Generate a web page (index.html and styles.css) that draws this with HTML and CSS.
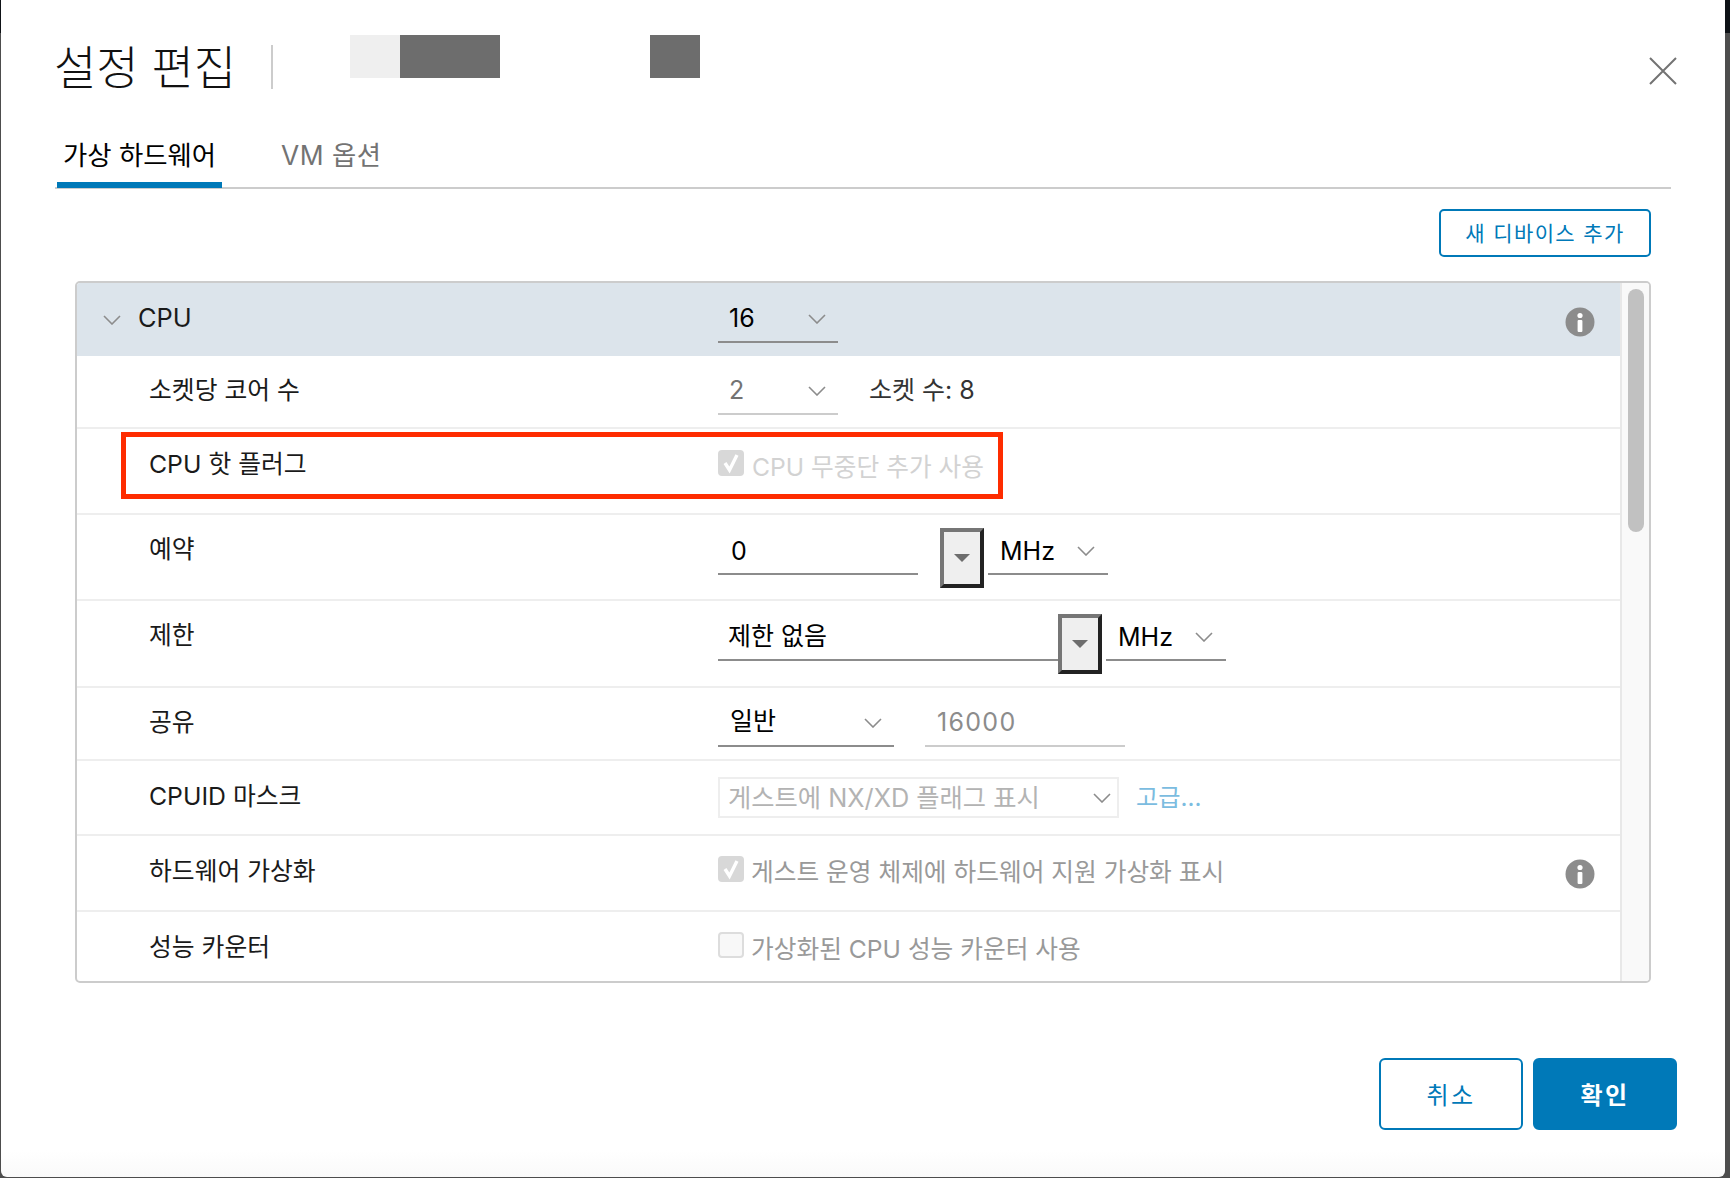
FILE: index.html
```html
<!DOCTYPE html>
<html lang="ko">
<head>
<meta charset="utf-8">
<title>설정 편집</title>
<link rel="stylesheet" href="styles.css">
</head>
<body>
<div class="dialog">
  <header class="head">
    <h1 class="title">설정 편집</h1>
    <span class="vr"></span>
    <div class="redact">
      <span class="rd light"></span><span class="rd dark wide"></span><span class="rd gap"></span><span class="rd dark"></span>
    </div>
    <button class="close" aria-label="닫기">
      <svg width="28" height="28" viewBox="0 0 28 28"><path d="M1 1L27 27M27 1L1 27" stroke="#737373" stroke-width="2" fill="none"/></svg>
    </button>
  </header>
  <nav class="tabs">
    <a class="tab active">가상 하드웨어</a>
    <a class="tab">VM 옵션</a>
  </nav>
  <div class="actions"><button class="btn add">새 디바이스 추가</button></div>
  <section class="panel">
    <div class="rows">
      <div class="row r-head">
        <svg class="chev twist" viewBox="0 0 18 10"><path d="M1 1L9 9L17 1"/></svg>
        <span class="label strong">CPU</span>
        <div class="ctl">
          <span class="sel w120"><span class="val">16</span><svg class="chev" viewBox="0 0 18 10"><path d="M1 1L9 9L17 1"/></svg></span>
        </div>
        <svg class="info" viewBox="0 0 30 30"><circle cx="15" cy="15" r="14.5"/><circle class="i" cx="15" cy="8.5" r="2.6"/><rect class="i" x="12.6" y="13" width="4.8" height="12" rx="1"/></svg>
      </div>
      <div class="row r1">
        <span class="label">소켓당 코어 수</span>
        <div class="ctl">
          <span class="sel w120 off"><span class="val">2</span><svg class="chev" viewBox="0 0 18 10"><path d="M1 1L9 9L17 1"/></svg></span>
          <span class="note">소켓 수: 8</span>
        </div>
      </div>
      <div class="row r2">
        <span class="label">CPU 핫 플러그</span>
        <div class="ctl">
          <span class="cb on"><svg viewBox="0 0 26 26"><path d="M7 13L11.5 20L19 5"/></svg></span>
          <span class="cbt faint">CPU 무중단 추가 사용</span>
        </div>
        <span class="mark"></span>
      </div>
      <div class="row r3">
        <span class="label">예약</span>
        <div class="ctl">
          <span class="inp w200 tall"><span class="val">0</span></span>
          <span class="spin s3"><i></i></span>
          <span class="sel w120 unit tall"><span class="val">MHz</span><svg class="chev" viewBox="0 0 18 10"><path d="M1 1L9 9L17 1"/></svg></span>
        </div>
      </div>
      <div class="row r4">
        <span class="label">제한</span>
        <div class="ctl">
          <span class="inp w340 tall"><span class="val tight">제한 없음</span></span>
          <span class="spin s4"><i></i></span>
          <span class="sel w120 unit tall"><span class="val">MHz</span><svg class="chev" viewBox="0 0 18 10"><path d="M1 1L9 9L17 1"/></svg></span>
        </div>
      </div>
      <div class="row r5">
        <span class="label">공유</span>
        <div class="ctl">
          <span class="sel w176"><span class="val">일반</span><svg class="chev" viewBox="0 0 18 10"><path d="M1 1L9 9L17 1"/></svg></span>
          <span class="inp w200 off share"><span class="val">16000</span></span>
        </div>
      </div>
      <div class="row r6">
        <span class="label">CPUID 마스크</span>
        <div class="ctl">
          <span class="box"><span class="boxt">게스트에 NX/XD 플래그 표시</span><svg class="chev" viewBox="0 0 18 10"><path d="M1 1L9 9L17 1"/></svg></span>
          <a class="link">고급...</a>
        </div>
      </div>
      <div class="row r7">
        <span class="label">하드웨어 가상화</span>
        <div class="ctl">
          <span class="cb on"><svg viewBox="0 0 26 26"><path d="M7 13L11.5 20L19 5"/></svg></span>
          <span class="cbt">게스트 운영 체제에 하드웨어 지원 가상화 표시</span>
        </div>
        <svg class="info" viewBox="0 0 30 30"><circle cx="15" cy="15" r="14.5"/><circle class="i" cx="15" cy="8.5" r="2.6"/><rect class="i" x="12.6" y="13" width="4.8" height="12" rx="1"/></svg>
      </div>
      <div class="row r8">
        <span class="label">성능 카운터</span>
        <div class="ctl">
          <span class="cb"></span>
          <span class="cbt">가상화된 CPU 성능 카운터 사용</span>
        </div>
      </div>
    </div>
    <div class="track"><span class="thumb"></span></div>
  </section>
  <footer class="foot">
    <button class="btn lg">취소</button>
    <button class="btn lg primary">확인</button>
  </footer>
</div>
</body>
</html>
```

FILE: styles.css
```css
* { box-sizing: border-box; }
html, body { margin: 0; height: 100%; }
body {
  background: linear-gradient(#0e1216 33px, #4d4d4d 33px);
  font-family: "Inter", "Noto Sans CJK KR", sans-serif;
  color: #000;
  overflow: hidden;
}
.dialog {
  width: 1724px;
  height: 1177px;
  margin-left: 1px;
  background: linear-gradient(#fff 1150px, #fafafa);
  border-radius: 0 0 6px 6px;
  display: flex;
  flex-direction: column;
}
.head {
  height: 121px;
  padding: 35px 48px 0 53px;
  display: flex;
  align-items: flex-start;
}
.title {
  margin: 6px 0 0;
  font-size: 46px;
  line-height: 46px;
  font-weight: 300;
  font-family: "Noto Sans CJK KR", sans-serif;
  color: #111;
  white-space: nowrap;
  width: 217px;
}
.vr { width: 2px; height: 44px; margin-top: 10px; background: #ccc; }
.redact { display: flex; margin-left: 77px; height: 43px; }
.rd { display: block; width: 50px; height: 43px; }
.rd.light { background: #efefef; }
.rd.dark { background: #6d6d6d; }
.rd.wide { width: 100px; }
.rd.gap { width: 150px; }
.close {
  margin-left: auto;
  margin-top: 22px;
  padding: 0;
  width: 28px;
  height: 28px;
  border: 0;
  background: none;
}
.close svg { display: block; }
.tabs {
  height: 68px;
  margin: 0 54px 0 54px;
  border-bottom: 2px solid #ccc;
  display: flex;
  padding-left: 2px;
  gap: 59px;
}
.tab {
  height: 67px;
  padding: 17px 0 0 6px;
  font-size: 26.4px;
  line-height: 34px;
  color: #737373;
  white-space: nowrap;
  width: 165px;
}
.tab + .tab { width: auto; padding-left: 0; letter-spacing: 0.5px; }
.tab.active { color: #000; border-bottom: 6px solid #0079b8; }
.actions {
  height: 92px;
  padding: 20px 74px 0 0;
  display: flex;
  justify-content: flex-end;
}
.btn {
  font-family: "Noto Sans CJK KR", sans-serif;
  border: 2px solid #0079b8;
  background: #fff;
  color: #0079b8;
  border-radius: 5px;
  padding: 0;
}
.add { width: 212px; height: 48px; font-size: 21px; letter-spacing: 1.4px; padding-bottom: 3px; }
.panel {
  margin-left: 74px;
  width: 1576px;
  height: 702px;
  border: 2px solid #ccc;
  border-radius: 5px;
  display: flex;
  overflow: hidden;
}
.rows { flex: 1; min-width: 0; }
.row {
  position: relative;
  display: flex;
  align-items: flex-start;
  padding-left: 72px;
  border-bottom: 2px solid #eee;
}
.label { width: 569px; font-size: 24.8px; line-height: 34px; white-space: nowrap; color: #1a1a1a; flex: none; }
.ctl { display: flex; align-items: flex-start; flex: none; }
.r-head { height: 73px; padding: 16px 0 0 26px; background: #dce4eb; border-bottom: 0; }
.r-head .label { width: 580px; margin-top: 2px; font-size: 25.4px; }
.r-head .sel { padding-left: 11px; }
.r1 { height: 73px; padding-top: 15px; }
.r1 .label { margin-top: 2px; }
.r2 { height: 86px; }
.r3 { height: 86px; }
.r4 { height: 87px; }
.r5 { height: 73px; }
.r6 { height: 75px; }
.r7 { height: 76px; }
.r8 { height: 69px; border-bottom: 0; }
.twist { width: 18px; height: 10px; margin: 16px 17px 0 0; flex: none; }
.chev { width: 18px; height: 10px; flex: none; }
.chev path { fill: none; stroke: #8c8c8c; stroke-width: 1.6; }
.sel, .inp {
  display: flex;
  align-items: flex-start;
  justify-content: space-between;
  height: 44px;
  padding: 2px 0 0 11px;
  border-bottom: 2px solid #8c8c8c;
  font-size: 25px;
  line-height: 34px;
}
.sel .chev { margin: 13px 12px 0 0; }
.w120 { width: 120px; }
.w176 { width: 176px; }
.w200 { width: 200px; }
.w340 { width: 341px; }
.sel.off, .inp.off { border-color: #ccc; }
.off .val { color: #737373; }
.note { margin: 2px 0 0 31px; font-size: 25px; line-height: 34px; color: #333; }
.inp.tall { padding-left: 13px; }
.sel.tall, .inp.tall { height: 47px; padding-top: 6px; }
.val.tight { margin: -1px 0 0 -3px; }
.r2 .label { margin-top: 18px; }
.r2 .ctl { margin-top: 21px; }
.cb {
  display: block;
  width: 26px;
  height: 26px;
  border: 2px solid #ddd;
  background: #f8f8f8;
  border-radius: 4px;
  flex: none;
}
.cb.on { border: 0; background: #d8d8d8; }
.cb svg { display: block; width: 26px; height: 26px; }
.cb path { fill: none; stroke: #fff; stroke-width: 3.4; }
.cbt { margin-left: 7px; font-size: 24.7px; line-height: 34px; color: #999; white-space: nowrap; }
.cbt.faint { margin-left: 8px; color: #d2d2d2; }
.mark {
  position: absolute;
  left: 44px;
  top: 3px;
  width: 882px;
  height: 67px;
  border: 5px solid #fe2c00;
}
.r3 .label { margin-top: 17px; }
.r3 .ctl { margin-top: 13px; }
.spin {
  display: flex;
  justify-content: center;
  align-items: flex-start;
  width: 44px;
  height: 60px;
  border: 4px solid;
  border-color: #767676 #222 #222 #767676;
  background: #efefef;
  flex: none;
}
.spin i {
  display: block;
  margin-top: 22px;
  border: 8px solid transparent;
  border-top: 8px solid #6d6d6d;
  border-bottom: 0;
}
.s3 { margin: 0 4px 0 22px; }
.s4 { margin: 0 4px 0 -1px; }
.unit { padding-left: 12px; }
.sel.unit .chev { margin: 12px 13px 0 0; }
.r4 .label { margin-top: 17px; }
.r4 .ctl { margin-top: 13px; }
.r5 .label { margin-top: 17px; }
.r5 .ctl { margin-top: 14px; }
.r5 .sel { height: 45px; padding-left: 12px; }
.r5 .sel .chev { margin-top: 14px; }
.share { margin-left: 31px; height: 45px; padding: 3px 0 0 12px; letter-spacing: 1.3px; }
.share .val { color: #8c8c8c; }
.r6 .label { margin-top: 18px; }
.r6 .ctl { margin-top: 16px; align-items: center; }
.box {
  display: flex;
  align-items: center;
  justify-content: space-between;
  width: 401px;
  height: 41px;
  padding: 0 6px 4px 8px;
  border: 2px solid #eee;
}
.box .chev { margin-top: 4px; }
.boxt { font-size: 25.3px; color: #b3b3b3; white-space: nowrap; }
.link { margin-left: 17px; padding-bottom: 4px; font-size: 24.2px; color: #7bbce0; }
.r7 .label { margin-top: 18px; }
.r7 .ctl { margin-top: 20px; }
.r7 .cbt { margin-top: -1px; }
.r8 .label { margin-top: 18px; }
.r8 .ctl { margin-top: 20px; }
.info { position: absolute; left: 1488px; top: 24px; width: 30px; height: 30px; }
.r7 .info { top: 23px; }
.info circle { fill: #8c8c8c; }
.info .i { fill: #fff; }
.track {
  width: 29px;
  flex: none;
  background: #f9f9f9;
  border-left: 2px solid #e8e8e8;
  padding: 6px 6px 0;
}
.thumb { display: block; width: 16px; height: 243px; background: #c1c1c1; border-radius: 8px; }
.foot {
  flex: 1;
  padding: 75px 48px 0 0;
  display: flex;
  justify-content: flex-end;
  gap: 10px;
}
.lg { width: 144px; height: 72px; font-size: 24px; letter-spacing: 2.5px; border-radius: 6px; padding-bottom: 2px; }
.primary { background: #0079b8; color: #fff; font-weight: 700; }
```
